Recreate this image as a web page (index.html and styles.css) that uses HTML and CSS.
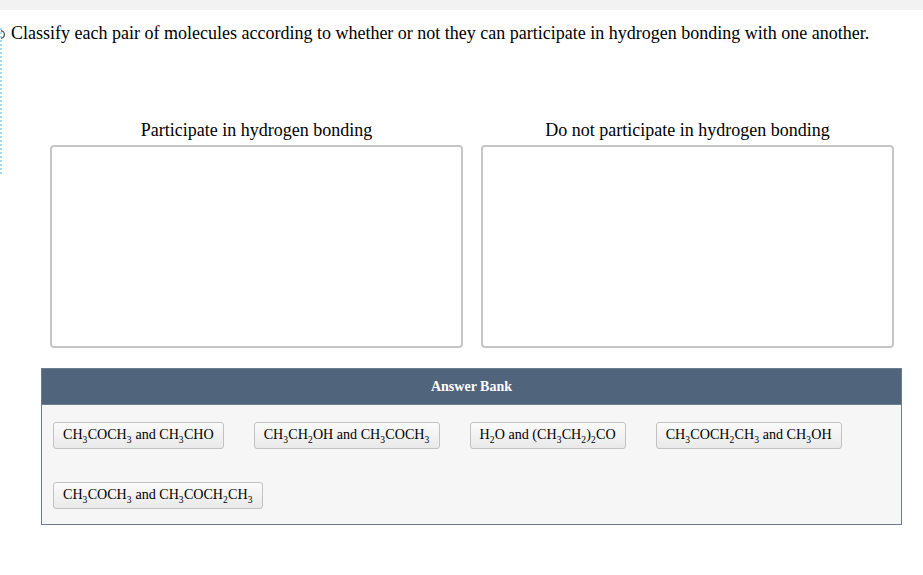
FILE: index.html
```html
<!DOCTYPE html>
<html lang="en">
<head>
<meta charset="utf-8">
<title>Hydrogen bonding classification</title>
<link rel="stylesheet" href="styles.css">
</head>
<body>
<div class="topbar"></div>
<div class="page">
  <div class="rail"></div>
  <div class="content">
    <p class="question"><svg class="marker" width="4" height="9" viewBox="0 0 4 9" aria-hidden="true"><path d="M0 0.8 A3.4 3.7 0 0 1 0 8.2" fill="none" stroke="#444" stroke-width="1.2"/></svg>Classify each pair of molecules according to whether or not they can participate in hydrogen bonding with one another.</p>

    <div class="bins">
      <div class="bin">
        <div class="bin-label">Participate in hydrogen bonding</div>
        <div class="drop"></div>
      </div>
      <div class="bin">
        <div class="bin-label">Do not participate in hydrogen bonding</div>
        <div class="drop"></div>
      </div>
    </div>

    <div class="bank">
      <div class="bank-head">Answer Bank</div>
      <div class="bank-body">
        <div class="chip"><span>CH<sub>3</sub>COCH<sub>3</sub> and CH<sub>3</sub>CHO</span></div>
        <div class="chip"><span>CH<sub>3</sub>CH<sub>2</sub>OH and CH<sub>3</sub>COCH<sub>3</sub></span></div>
        <div class="chip"><span>H<sub>2</sub>O and (CH<sub>3</sub>CH<sub>2</sub>)<sub>2</sub>CO</span></div>
        <div class="chip"><span>CH<sub>3</sub>COCH<sub>2</sub>CH<sub>3</sub> and CH<sub>3</sub>OH</span></div>
        <div class="chip"><span>CH<sub>3</sub>COCH<sub>3</sub> and CH<sub>3</sub>COCH<sub>2</sub>CH<sub>3</sub></span></div>
      </div>
    </div>
  </div>
</div>
</body>
</html>
```

FILE: styles.css
```css
html, body {
  margin: 0;
  padding: 0;
  background: #ffffff;
  font-family: "Liberation Serif", "Times New Roman", serif;
  color: #000000;
}

.topbar {
  height: 10px;
  background: #f2f2f2;
}

.page {
  display: flex;
  align-items: flex-start;
}

.rail {
  flex: none;
  width: 0;
  height: 146px;
  margin-top: 18px;
  border-left: 2px dotted #a8dcec;
}

.content {
  flex: 1;
}

.question {
  margin: 12px 0 0 0;
  font-size: 18px;
  line-height: 22px;
  white-space: nowrap;
}

.marker {
  display: inline-block;
  vertical-align: 0;
  margin: 0 6px 0 -1px;
}

.bins {
  display: flex;
  gap: 18px;
  margin: 75px 0 0 48px;
}

.bin {
  width: 413px;
  display: flex;
  flex-direction: column;
  align-items: center;
}

.bin-label {
  font-size: 18px;
  line-height: 22px;
  margin-bottom: 4px;
}

.drop {
  width: 100%;
  height: 203px;
  border: 2px solid #c6c6c6;
  border-radius: 4px;
  box-sizing: border-box;
}

.bank {
  width: 861px;
  margin: 20px 0 0 39px;
  border: 1px solid #6d7d90;
  box-sizing: border-box;
}

.bank-head {
  height: 35px;
  background: #50647b;
  color: #ffffff;
  font-weight: bold;
  font-size: 14px;
  display: flex;
  align-items: center;
  justify-content: center;
  border-bottom: 1px solid #6d7d90;
}

.bank-body {
  background: #f6f6f6;
  display: flex;
  flex-wrap: wrap;
  gap: 33px 30px;
  padding: 17px 11px 15px 11px;
}

.chip {
  height: 27px;
  box-sizing: border-box;
  padding: 0 9px 2px 9px;
  display: flex;
  align-items: center;
  font-size: 14.1px;
  color: #000;
  border: 1px solid #c2c2c2;
  border-radius: 3px;
  background: linear-gradient(#fbfbfb, #e9e9e9);
  white-space: nowrap;
}

.chip sub {
  font-size: 9.5px;
  line-height: 0;
  vertical-align: -4px;
  margin-right: 0.3px;
}
```
